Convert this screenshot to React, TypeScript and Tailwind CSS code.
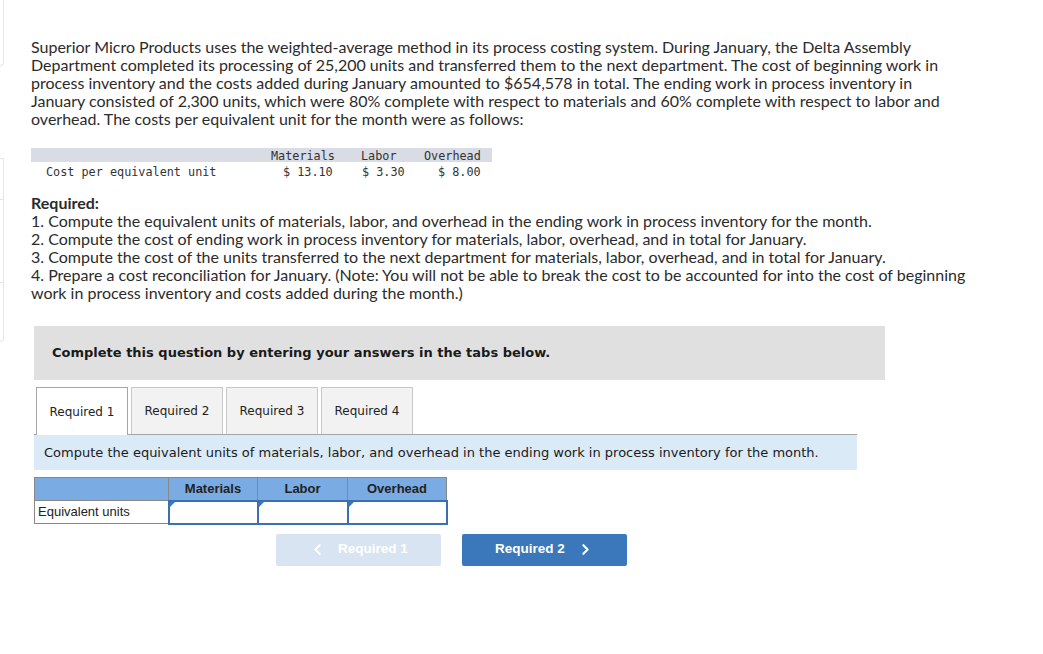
import { ChevronLeft, ChevronRight } from 'lucide-react';

const INTRO = [
  'Superior Micro Products uses the weighted-average method in its process costing system. During January, the Delta Assembly',
  'Department completed its processing of 25,200 units and transferred them to the next department. The cost of beginning work in',
  'process inventory and the costs added during January amounted to $654,578 in total. The ending work in process inventory in',
  'January consisted of 2,300 units, which were 80% complete with respect to materials and 60% complete with respect to labor and',
  'overhead. The costs per equivalent unit for the month were as follows:',
];

const REQUIREMENTS = [
  '1. Compute the equivalent units of materials, labor, and overhead in the ending work in process inventory for the month.',
  '2. Compute the cost of ending work in process inventory for materials, labor, overhead, and in total for January.',
  '3. Compute the cost of the units transferred to the next department for materials, labor, overhead, and in total for January.',
  '4. Prepare a cost reconciliation for January. (Note: You will not be able to break the cost to be accounted for into the cost of beginning',
  'work in process inventory and costs added during the month.)',
];

const TABS = ['Required 1', 'Required 2', 'Required 3', 'Required 4'];

function AnswerCell() {
  return (
    <td className="relative h-[23px] border-2 border-[#3a6fb0] bg-white p-0">
      {/* little blue corner marker */}
      <span className="absolute left-0 top-0 h-0 w-0 border-t-[5px] border-r-[5px] border-t-[#3a78c2] border-r-transparent" />
    </td>
  );
}

export default function App() {
  return (
    <div className="relative min-h-[654px] w-[1043px] bg-white">
      {/* faint side panel edges on the left */}
      <div className="absolute left-0 top-0 h-[66px] w-[4px] rounded-br border-b border-r border-[#e6e6e6]" />
      <div className="absolute left-0 top-[158px] flex h-[184px] w-[4px] flex-col rounded-br border-y border-r border-[#e6e6e6]">
        <div className="h-[41px] border-b border-[#e6e6e6]" />
        <div className="h-[83px] border-b border-[#e6e6e6]" />
      </div>

      <div className="pl-[31px] pt-[38px]">
        <div className="whitespace-nowrap font-['Lato','Open_Sans',sans-serif] text-[16px] leading-[18px] text-[#2b2b2b]">
          {INTRO.map((l) => (
            <div key={l}>{l}</div>
          ))}
        </div>

        {/* cost per equivalent unit table */}
        <div className="mt-[20px] w-[461px] whitespace-nowrap font-['DejaVu_Sans_Mono','Liberation_Mono',monospace] text-[11.8px] text-[#333]">
          <div className="flex h-[14px] items-center bg-[#d9dce4] pt-[2px] leading-[14px]">
            <div className="w-[240px]" />
            <div className="w-[90px]">Materials</div>
            <div className="w-[63px]">Labor</div>
            <div>Overhead</div>
          </div>
          <div className="flex pt-[3px] leading-[14px]">
            <div className="w-[252px] pl-[15px]">Cost per equivalent unit</div>
            <div className="w-[79px]">$ 13.10</div>
            <div className="w-[76px]">$ 3.30</div>
            <div>$ 8.00</div>
          </div>
        </div>

        <div className="mt-[15px] whitespace-nowrap font-['Lato','Open_Sans',sans-serif] text-[16px] leading-[18px] text-[#2b2b2b]">
          <div className="font-bold">Required:</div>
          {REQUIREMENTS.map((r) => (
            <div key={r}>{r}</div>
          ))}
        </div>
      </div>

      <div className="ml-[34px] mt-[24px] w-[851px]">
        <div className="flex h-[54px] items-center bg-[#e0e0e0] pl-[18px] font-['DejaVu_Sans',sans-serif] text-[13px] font-bold text-[#1a1a1a]">
          Complete this question by entering your answers in the tabs below.
        </div>

        {/* tabs */}
        <div className="mt-[7px] flex w-[823px] gap-[3px] pl-[2px] font-['DejaVu_Sans',sans-serif] text-[12px] text-[#222]">
          {TABS.map((t, i) => (
            <div
              key={t}
              className={
                i === 0
                  ? 'relative z-10 -mb-[1px] flex h-[48px] w-[92px] items-center justify-center border border-b-0 border-[#a6a6a6] bg-white'
                  : 'flex h-[47px] w-[92px] items-center justify-center border border-b-0 border-[#c8c8c8] bg-[#f2f2f2]'
              }
            >
              {t}
            </div>
          ))}
        </div>

        <div className="flex h-[36px] w-[823px] items-center border-t border-[#a6a6a6] bg-[#dbeaf7] pl-[10px] font-['DejaVu_Sans',sans-serif] text-[13px] text-[#1a1a1a]">
          Compute the equivalent units of materials, labor, and overhead in the ending work in process inventory for the month.
        </div>

        {/* answer grid */}
        <table className="mt-[7px] border-collapse font-['Liberation_Sans',Arial,sans-serif] text-[13px] text-[#222]">
          <thead>
            <tr className="h-[23px] bg-[#7aabe2]">
              <th className="w-[134px] border border-[#888]" />
              <th className="w-[89px] border border-[#888] font-bold">Materials</th>
              <th className="w-[90px] border border-[#888] font-bold">Labor</th>
              <th className="w-[99px] border border-[#888] font-bold">Overhead</th>
            </tr>
          </thead>
          <tbody>
            <tr>
              <td className="h-[23px] border border-[#888] pl-[3px]">Equivalent units</td>
              <AnswerCell />
              <AnswerCell />
              <AnswerCell />
            </tr>
          </tbody>
        </table>

        <div className="mt-[9px] flex gap-[21px] pl-[242px] font-['Liberation_Sans',Arial,sans-serif] text-[13.5px] font-bold text-white">
          <button className="flex h-[32px] w-[165px] items-center justify-center gap-[12px] rounded-[2px] bg-[#d8e4f2]">
            <ChevronLeft className="h-[17px] w-[17px]" strokeWidth={3} />
            Required 1
          </button>
          <button className="flex h-[32px] w-[165px] items-center justify-center gap-[12px] rounded-[2px] bg-[#3b78bb]">
            Required 2
            <ChevronRight className="h-[17px] w-[17px]" strokeWidth={3} />
          </button>
        </div>
      </div>
    </div>
  );
}
